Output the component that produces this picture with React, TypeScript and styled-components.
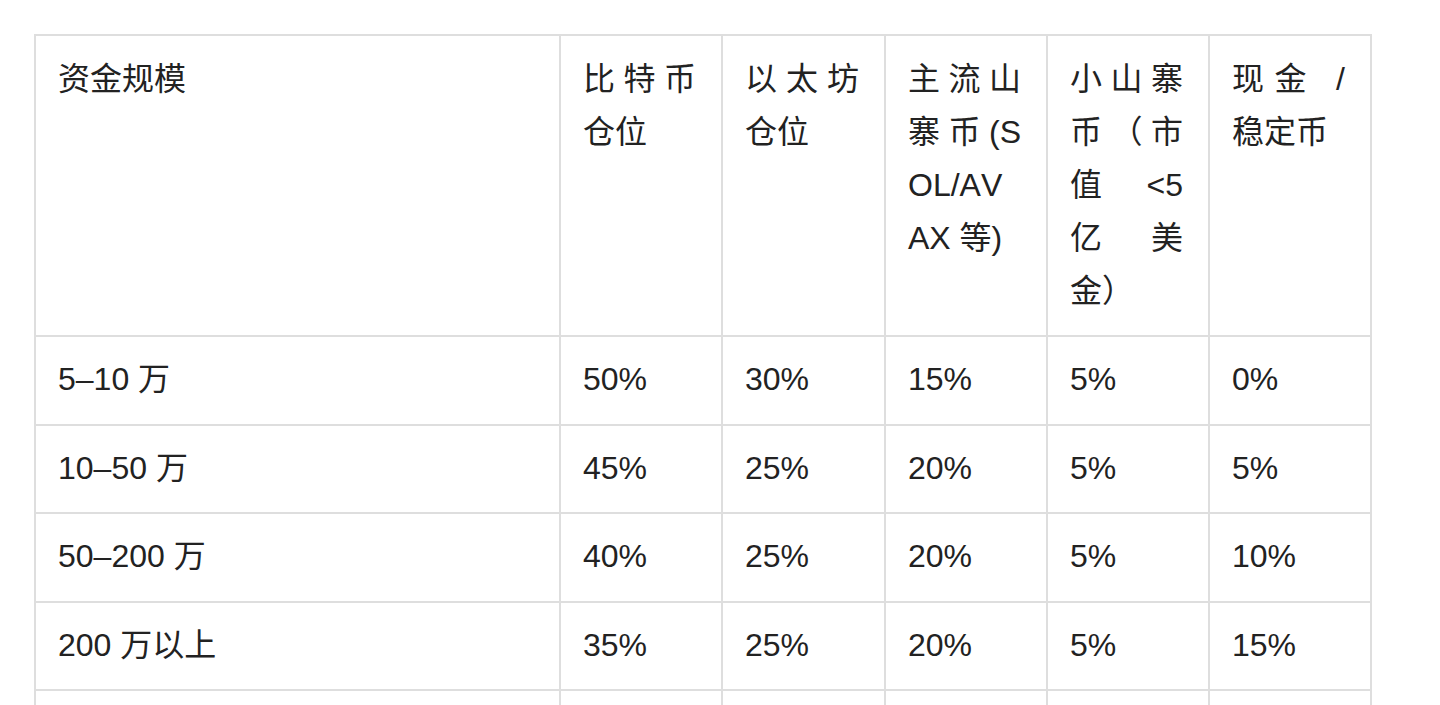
import React from "react";
import styled, { createGlobalStyle } from "styled-components";

const GlobalStyle = createGlobalStyle`
  html, body {
    margin: 0;
    padding: 0;
    background: #ffffff;
  }
  body {
    font-family: "Liberation Sans", "Noto Sans CJK SC", sans-serif;
    color: #222222;
  }
`;

const Page = styled.div`
  padding: 34px 0 0 34px;
  width: 1440px;
  box-sizing: border-box;
  height: 705px;
  overflow: hidden;
`;

const Table = styled.table`
  width: 1336px;
  table-layout: fixed;
  border-collapse: collapse;
  border: 2px solid #dedede;
  font-size: 32px;
  line-height: 53px;
`;

const Col = styled.col<{ $w: number }>`
  width: ${(p) => p.$w}px;
`;

const Th = styled.th`
  border: 2px solid #dedede;
  padding: 17px 25px 17px 22px;
  text-align: justify;
  vertical-align: top;
  font-weight: 400;
  word-break: break-all;
  line-break: strict;
  text-spacing-trim: space-all;
  font-kerning: none;
  color: #222222;
`;

const Td = styled.td`
  border: 2px solid #dedede;
  padding: 16px 22px 17.5px 22px;
  text-align: left;
  vertical-align: middle;
  color: #222222;
  white-space: nowrap;
`;

const headers = [
  "资金规模",
  "比特币仓位",
  "以太坊仓位",
  "主流山寨币(SOL/AVAX 等)",
  "小山寨币（市值 <5 亿美金）",
  "现金 / 稳定币",
];

const rows = [
  ["5–10 万", "50%", "30%", "15%", "5%", "0%"],
  ["10–50 万", "45%", "25%", "20%", "5%", "5%"],
  ["50–200 万", "40%", "25%", "20%", "5%", "10%"],
  ["200 万以上", "35%", "25%", "20%", "5%", "15%"],
  ["调仓频率", "季度", "季度", "月度", "月度", "随时"],
];

export default function App() {
  return (
    <>
      <GlobalStyle />
      <Page>
        <Table>
          <colgroup>
            <Col $w={525} />
            <Col $w={162} />
            <Col $w={163} />
            <Col $w={162} />
            <Col $w={162} />
            <Col $w={162} />
          </colgroup>
          <thead>
            <tr>
              {headers.map((h) => (
                <Th key={h}>{h}</Th>
              ))}
            </tr>
          </thead>
          <tbody>
            {rows.map((r) => (
              <tr key={r[0]}>
                {r.map((c, i) => (
                  <Td key={i}>{c}</Td>
                ))}
              </tr>
            ))}
          </tbody>
        </Table>
      </Page>
    </>
  );
}
